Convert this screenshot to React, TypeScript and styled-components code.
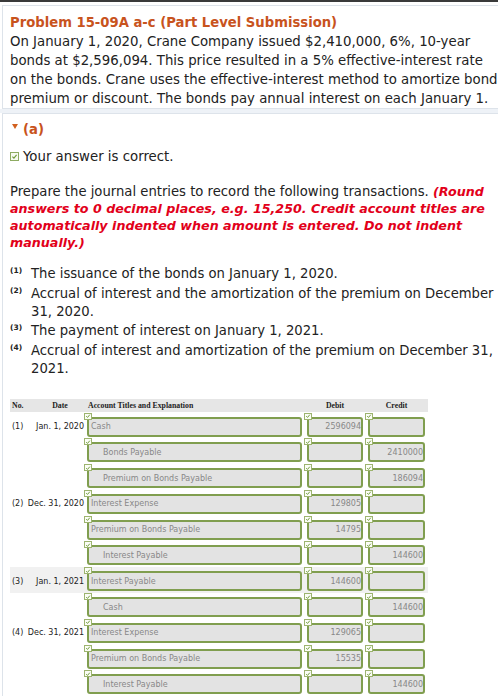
import React from "react";
import styled, { createGlobalStyle } from "styled-components";

const GlobalStyle = createGlobalStyle`
  body {
    margin: 0;
    background: #fff;
    font-family: "DejaVu Sans", Verdana, sans-serif;
    color: #222;
  }
`;

const Page = styled.div`
  border-top: 2px solid #3a3a3a;
  padding-top: 3px;
`;

const IntroPanel = styled.section`
  margin-left: 2px;
  border: 1px solid #dde3ea;
  border-right: none;
  padding: 7px 0 0 7px;
`;

const Title = styled.h2`
  margin: 0;
  font-size: 13.2px;
  line-height: 19px;
  font-weight: bold;
  color: #c8531d;
`;

const Intro = styled.p`
  margin: 0;
  font-size: 13.3px;
  line-height: 19px;
`;

const Band = styled.div`
  height: 4px;
  background: #eef2f7;
`;

const PartPanel = styled.section`
  margin-left: 2px;
  border-top: 1px solid #dde3ea;
  border-left: 1px solid #dde3ea;
  padding: 6px 0 0 7px;
`;

const PartHead = styled.div`
  display: flex;
  align-items: center;
  gap: 5px;
  height: 19px;
  font-size: 13.2px;
  font-weight: bold;
  color: #c8531d;
`;

const Caret = styled.span`
  width: 0;
  height: 0;
  margin: -6px 0 0 2px;
  border-left: 3px solid transparent;
  border-right: 3px solid transparent;
  border-top: 5px solid #d2601f;
`;

const Correct = styled.div`
  display: flex;
  align-items: center;
  gap: 4px;
  margin-top: 8px;
  height: 19px;
  font-size: 13.3px;
`;

const CheckBox = styled.span<{ $size: number }>`
  display: inline-flex;
  align-items: center;
  justify-content: center;
  box-sizing: border-box;
  width: ${(p) => p.$size}px;
  height: ${(p) => p.$size}px;
  border: 1px solid #8eab62;
  background: #f7faf1;
  flex: none;
`;

const Instructions = styled.p`
  margin: 17px 0 0;
  font-size: 13.2px;
  line-height: 17px;
`;

const Note = styled.span`
  color: #e2001a;
  font-size: 12.7px;
  font-weight: bold;
  font-style: italic;
`;

const List = styled.ol`
  margin: 14px 0 0;
  padding: 0;
  list-style: none;
`;

const Item = styled.li`
  display: flex;
  font-size: 13.2px;
  line-height: 18px;
  margin-bottom: 1.5px;
`;

const ItemNo = styled.sup`
  width: 21px;
  flex: none;
  font-size: 7.5px;
  line-height: 12px;
  font-weight: bold;
  vertical-align: top;
`;

const Table = styled.div`
  margin-top: 21px;
  width: 418px;
`;

const columns = "17px 60px 215px 61px 62px";

const HeadRow = styled.div`
  display: grid;
  grid-template-columns: ${columns};
  align-items: center;
  height: 13.5px;
  background: #e6e6e6;
  font-family: "Liberation Serif", "Times New Roman", serif;
  font-weight: bold;
  font-size: 7.8px;
`;

const HeadCell = styled.span<{ $align?: string; $pad?: number }>`
  text-align: ${(p) => p.$align || "left"};
  padding-left: ${(p) => p.$pad || 0}px;
`;

const Row = styled.div<{ $shaded?: boolean }>`
  display: grid;
  grid-template-columns: ${columns};
  height: 25.8px;
  background: ${(p) => (p.$shaded ? "#f1f1f1" : "transparent")};
  font-size: 8px;
`;

const NoCell = styled.span`
  padding: 10px 0 0 2px;
  white-space: nowrap;
  color: #222;
`;

const DateCell = styled.span`
  padding: 10px 3px 0 0;
  text-align: right;
  white-space: nowrap;
  color: #222;
`;

const Field = styled.div<{ $offset: number }>`
  position: relative;
  margin: 4.5px 0 0 ${(p) => p.$offset}px;
  box-sizing: border-box;
  height: 20px;
  border: 2px solid #809e4f;
  border-radius: 3px;
  background: #e3e3e3;
  color: #888;
  display: flex;
  align-items: center;
`;

const FieldText = styled.span<{ $indent?: boolean; $right?: boolean }>`
  flex: 1;
  padding-left: ${(p) => (p.$indent ? 14 : 2)}px;
  text-align: ${(p) => (p.$right ? "right" : "left")};
  white-space: nowrap;
`;

const Badge = styled.span`
  position: absolute;
  left: -5px;
  top: -6px;
  display: flex;
  align-items: center;
  justify-content: center;
  box-sizing: border-box;
  width: 8px;
  height: 7px;
  border: 1px solid #9db46f;
  background: #fbfdf6;
`;

const Tick = ({ size }: { size: number }) => (
  <svg width={size} height={size} viewBox="0 0 10 10">
    <path d="M2 5.2 L4.2 7.4 L8 2.8" fill="none" stroke="#6f9a3a" strokeWidth="1.6" />
  </svg>
);

interface Line {
  acct: string;
  indent?: boolean;
  debit?: string;
  credit?: string;
}

interface Entry {
  no: string;
  date: string;
  shaded?: boolean;
  lines: Line[];
}

const entries: Entry[] = [
  {
    no: "(1)",
    date: "Jan. 1, 2020",
    lines: [
      { acct: "Cash", debit: "2596094" },
      { acct: "Bonds Payable", indent: true, credit: "2410000" },
      { acct: "Premium on Bonds Payable", indent: true, credit: "186094" },
    ],
  },
  {
    no: "(2)",
    date: "Dec. 31, 2020",
    lines: [
      { acct: "Interest Expense", debit: "129805" },
      { acct: "Premium on Bonds Payable", debit: "14795" },
      { acct: "Interest Payable", indent: true, credit: "144600" },
    ],
  },
  {
    no: "(3)",
    date: "Jan. 1, 2021",
    shaded: true,
    lines: [
      { acct: "Interest Payable", debit: "144600" },
      { acct: "Cash", indent: true, credit: "144600" },
    ],
  },
  {
    no: "(4)",
    date: "Dec. 31, 2021",
    lines: [
      { acct: "Interest Expense", debit: "129065" },
      { acct: "Premium on Bonds Payable", debit: "15535" },
      { acct: "Interest Payable", indent: true, credit: "144600" },
    ],
  },
];

const InputBox: React.FC<{ offset: number; children?: React.ReactNode }> = ({
  offset,
  children,
}) => (
  <Field $offset={offset}>
    <Badge>
      <Tick size={6} />
    </Badge>
    {children}
  </Field>
);

const transactions = [
  "The issuance of the bonds on January 1, 2020.",
  "Accrual of interest and the amortization of the premium on December 31, 2020.",
  "The payment of interest on January 1, 2021.",
  "Accrual of interest and amortization of the premium on December 31, 2021.",
];

export default function App() {
  return (
    <Page>
      <GlobalStyle />
      <IntroPanel>
        <Title>Problem 15-09A a-c (Part Level Submission)</Title>
        <Intro>
          On January 1, 2020, Crane Company issued $2,410,000, 6%, 10-year
          bonds at $2,596,094. This price resulted in a 5% effective-interest
          rate on the bonds. Crane uses the effective-interest method to
          amortize bond premium or discount. The bonds pay annual interest on
          each January 1.
        </Intro>
      </IntroPanel>
      <Band />
      <PartPanel>
        <PartHead>
          <Caret />
          (a)
        </PartHead>
        <Correct>
          <CheckBox $size={9}>
            <Tick size={7} />
          </CheckBox>
          Your answer is correct.
        </Correct>
        <Instructions>
          Prepare the journal entries to record the following transactions.{" "}
          <Note>
            (Round answers to 0 decimal places, e.g. 15,250. Credit account
            titles are automatically indented when amount is entered. Do not
            indent manually.)
          </Note>
        </Instructions>
        <List>
          {transactions.map((t, i) => (
            <Item key={i}>
              <ItemNo>({i + 1})</ItemNo>
              <span>{t}</span>
            </Item>
          ))}
        </List>
        <Table>
          <HeadRow>
            <HeadCell $pad={2}>No.</HeadCell>
            <HeadCell $align="center" $pad={6}>Date</HeadCell>
            <HeadCell $pad={1}>Account Titles and Explanation</HeadCell>
            <HeadCell $align="center" $pad={5}>Debit</HeadCell>
            <HeadCell $align="center" $pad={5}>Credit</HeadCell>
          </HeadRow>
          {entries.map((entry) =>
            entry.lines.map((line, i) => (
              <Row key={entry.no + i} $shaded={entry.shaded && i === 0}>
                <NoCell>{i === 0 ? entry.no : ""}</NoCell>
                <DateCell>{i === 0 ? entry.date : ""}</DateCell>
                <InputBox offset={0}>
                  <FieldText $indent={line.indent}>{line.acct}</FieldText>
                </InputBox>
                <InputBox offset={5}>
                  <FieldText $right>{line.debit}</FieldText>
                </InputBox>
                <InputBox offset={5}>
                  <FieldText $right>{line.credit}</FieldText>
                </InputBox>
              </Row>
            ))
          )}
        </Table>
      </PartPanel>
    </Page>
  );
}
